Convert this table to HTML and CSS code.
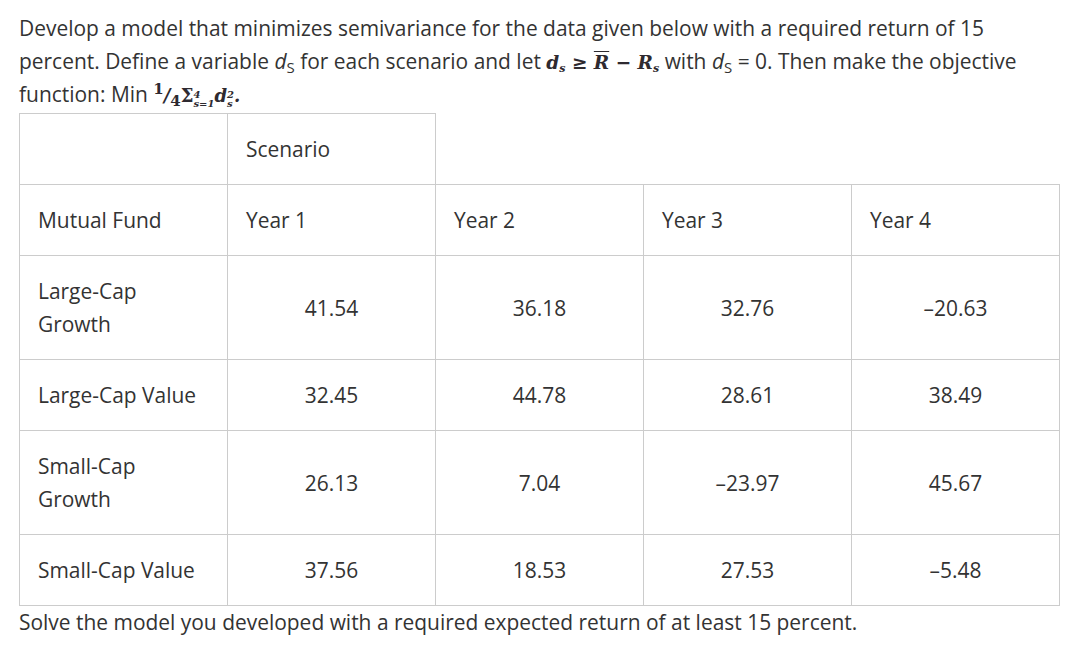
FILE: index.html
```html
<!DOCTYPE html>
<html>
<head>
<meta charset="utf-8">
<link rel="stylesheet" href="styles.css">
</head>
<body>
<div class="q">
<p class="text">Develop a model that minimizes semivariance for the data given below with a required return of 15 percent. Define a variable <i>d</i><sub class="sub">S</sub> for each scenario and let <span class="math">d<sub>s</sub> ≥ <span class="bar">R</span> − R<sub>s</sub></span> with <i>d</i><sub class="sub">S</sub> = 0. Then make the objective function: Min <span class="math obj"><span class="up">1</span>/<span class="dn">4</span><span class="sig">Σ</span><span class="lim"><span>4</span><span>s=1</span></span>d<span class="lim"><span>2</span><span>s</span></span>.</span></p>
<table class="grid">
<colgroup><col><col><col><col><col></colgroup>
<tr><td class="lab"></td><td class="lab">Scenario</td></tr>
<tr><td class="lab">Mutual Fund</td><td class="lab">Year 1</td><td class="lab">Year 2</td><td class="lab">Year 3</td><td class="lab">Year 4</td></tr>
<tr><td class="lab">Large-Cap<br>Growth</td><td>41.54</td><td>36.18</td><td>32.76</td><td>–20.63</td></tr>
<tr><td class="lab">Large-Cap Value</td><td>32.45</td><td>44.78</td><td>28.61</td><td>38.49</td></tr>
<tr><td class="lab">Small-Cap<br>Growth</td><td>26.13</td><td>7.04</td><td>–23.97</td><td>45.67</td></tr>
<tr><td class="lab">Small-Cap Value</td><td>37.56</td><td>18.53</td><td>27.53</td><td>–5.48</td></tr>
</table>
<p class="text">Solve the model you developed with a required expected return of at least 15 percent.</p>
</div>
</body>
</html>
```
FILE: styles.css
```css
html, body {
  margin: 0;
  padding: 0;
  background: #fff;
}
.q {
  padding: 12px 20px 0 19px;
  font-family: "Open Sans", "Liberation Sans", sans-serif;
  font-size: 20.95px;
  line-height: 33px;
  color: #333;
}
.text {
  margin: 0;
}
.sub {
  font-size: 15px;
  vertical-align: -4px;
  line-height: 0;
}
.math {
  font-family: "DejaVu Serif", "Liberation Serif", serif;
  font-style: italic;
  font-weight: bold;
  font-size: 18.5px;
  color: #2e2a30;
  line-height: 0;
}
.math sub {
  font-size: 11px;
  line-height: 0;
  vertical-align: -3px;
}
.bar {
  text-decoration: overline;
}
.obj {
  font-size: 18px;
}
.up, .dn {
  font-style: normal;
  font-size: 15px;
  display: inline-block;
  line-height: 0;
}
.up { vertical-align: 8px; }
.dn { vertical-align: -4px; }
.sig { font-style: normal; font-size: 18px; }
.lim {
  display: inline-block;
  font-size: 10px;
  line-height: 9px;
  vertical-align: -5px;
  text-align: left;
}
.lim span {
  display: block;
}
.grid {
  width: 1039px;
  table-layout: fixed;
  border-collapse: collapse;
  margin-top: 2px;
}
.grid col { width: 208px; }
.grid td {
  border: 1px solid #ccc;
  padding: 19px 18px 18px;
  text-align: center;
  vertical-align: middle;
  line-height: 33px;
}
.grid td.lab {
  text-align: left;
}
```
